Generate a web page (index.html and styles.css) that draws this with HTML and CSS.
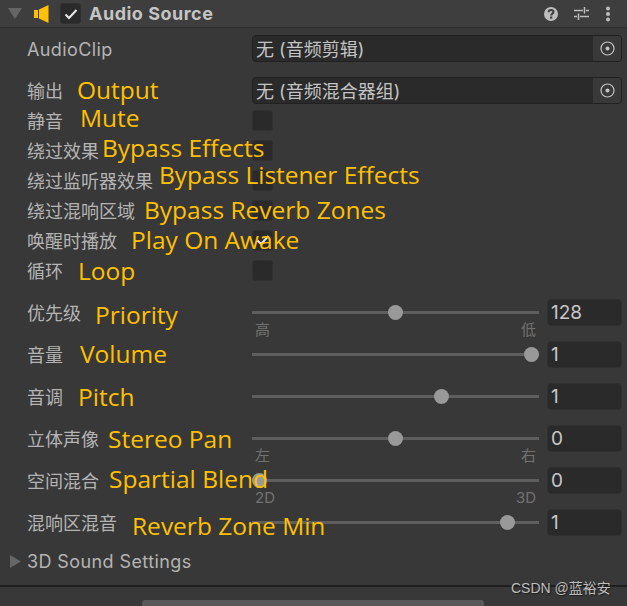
FILE: index.html
```html
<!DOCTYPE html>
<html lang="zh">
<head>
<meta charset="utf-8">
<title>Audio Source</title>
<link rel="stylesheet" href="styles.css">
</head>
<body>
<div class="inspector">
  <header class="head">
    <svg class="fold" width="14" height="11" viewBox="0 0 14 11"><path d="M0 0H14L7 11Z" fill="#666"/></svg>
    <svg class="speaker" width="15" height="18" viewBox="0 0 15 18"><path d="M0 5H4V13H0Z M5 4.5L14.5 0V18L5 13.5Z" fill="#ffc000"/></svg>
    <span class="box head-box"><svg width="14" height="12" viewBox="0 0 14 12"><path d="M1.5 6.5L5 10L12.5 2" fill="none" stroke="#e8e8e8" stroke-width="2"/></svg></span>
    <span class="title">Audio Source</span>
    <span class="tools">
      <svg width="16" height="16" viewBox="0 0 16 16"><circle cx="8" cy="8" r="7" fill="#bdbdbd"/><path d="M5.6 6.2C5.7 4.6 6.8 3.9 8.1 3.9C9.500 3.900 10.500 4.800 10.500 6C10.500 7.600 8.200 7.700 8.200 9.500" fill="none" stroke="#3e3e3e" stroke-width="2"/><rect x="7.100" y="10.500" width="2.200" height="2.200" fill="#3e3e3e"/></svg>
      <svg width="16" height="15" viewBox="0 0 16 15"><path d="M0 4.500H9M12 4.500H15M0 10.500H3M6 10.500H15M10.500 1V7.500M4.500 7.500V14" stroke="#bdbdbd" stroke-width="1.500" fill="none"/></svg>
      <svg class="dots" width="6" height="16" viewBox="0 0 6 16"><circle cx="3" cy="2.500" r="2" fill="#bdbdbd"/><circle cx="3" cy="8" r="2" fill="#bdbdbd"/><circle cx="3" cy="13.500" r="2" fill="#bdbdbd"/></svg>
    </span>
  </header>

  <section class="fields">
    <div class="row row-clip"><span class="label latin">AudioClip</span><div class="object"><span class="object-text">无 (音频剪辑)</span><span class="picker"><svg width="15" height="15" viewBox="0 0 15 15"><circle cx="7.500" cy="7.500" r="6.500" fill="none" stroke="#c4c4c4" stroke-width="1.200"/><circle cx="7.500" cy="7.500" r="2" fill="#c4c4c4"/></svg></span></div></div>
    <div class="row row-output"><span class="label">输出</span><div class="object"><span class="object-text">无 (音频混合器组)</span><span class="picker"><svg width="15" height="15" viewBox="0 0 15 15"><circle cx="7.500" cy="7.500" r="6.500" fill="none" stroke="#c4c4c4" stroke-width="1.200"/><circle cx="7.500" cy="7.500" r="2" fill="#c4c4c4"/></svg></span></div></div>
  </section>

  <section class="toggles">
    <div class="row row-toggle"><span class="label">静音</span><span class="box"></span></div>
    <div class="row row-toggle"><span class="label">绕过效果</span><span class="box"></span></div>
    <div class="row row-toggle"><span class="label">绕过监听器效果</span><span class="box"></span></div>
    <div class="row row-toggle"><span class="label">绕过混响区域</span><span class="box"></span></div>
    <div class="row row-toggle"><span class="label">唤醒时播放</span><span class="box"><svg width="14" height="12" viewBox="0 0 14 12"><path d="M1.500 6.500L5 10L12.500 2" fill="none" stroke="#e8e8e8" stroke-width="2"/></svg></span></div>
    <div class="row row-toggle"><span class="label">循环</span><span class="box"></span></div>
  </section>

  <section class="sliders">
    <div class="row row-slider"><span class="label">优先级</span><div class="track"><span class="thumb" style="--v:0.5"></span><span class="end end-l">高</span><span class="end end-r">低</span></div><span class="number">128</span></div>
    <div class="row row-slider"><span class="label">音量</span><div class="track"><span class="thumb" style="--v:1"></span></div><span class="number">1</span></div>
    <div class="row row-slider"><span class="label">音调</span><div class="track"><span class="thumb" style="--v:0.67"></span></div><span class="number">1</span></div>
    <div class="row row-slider"><span class="label">立体声像</span><div class="track"><span class="thumb" style="--v:0.5"></span><span class="end end-l">左</span><span class="end end-r">右</span></div><span class="number">0</span></div>
    <div class="row row-slider"><span class="label">空间混合</span><div class="track"><span class="thumb" style="--v:0"></span><span class="end end-l">2D</span><span class="end end-r">3D</span></div><span class="number">0</span></div>
    <div class="row row-slider"><span class="label">混响区混音</span><div class="track"><span class="thumb" style="--v:0.91"></span></div><span class="number">1</span></div>
  </section>

  <div class="foldout">
    <svg width="11" height="13" viewBox="0 0 11 13"><path d="M0 0L11 6.500L0 13Z" fill="#666"/></svg>
    <span class="label latin">3D Sound Settings</span>
  </div>

  <footer class="foot"><span class="add-button"></span></footer>
</div>

<div class="notes">
  <span class="note n-output">Output</span>
  <span class="note n-mute">Mute</span>
  <span class="note n-bypass">Bypass Effects</span>
  <span class="note n-listener">Bypass Listener Effects</span>
  <span class="note n-zones">Bypass Reverb Zones</span>
  <span class="note n-play">Play On Awake</span>
  <span class="note n-loop">Loop</span>
  <span class="note n-priority">Priority</span>
  <span class="note n-volume">Volume</span>
  <span class="note n-pitch">Pitch</span>
  <span class="note n-stereo">Stereo Pan</span>
  <span class="note n-spatial">Spartial Blend</span>
  <span class="note n-zone-min">Reverb Zone Min</span>
</div>
<span class="watermark">CSDN @蓝裕安</span>
</body>
</html>
```

FILE: styles.css
```css
html, body {
  margin: 0;
  padding: 0;
  height: 606px;
  overflow: hidden;
  background: #383838;
}
body {
  position: relative;
  font-family: Inter, "Noto Sans CJK SC", sans-serif;
  color: #b4b4b4;
}
.inspector {
  display: flex;
  flex-direction: column;
  height: 606px;
}
.head {
  display: flex;
  align-items: center;
  height: 27px;
  padding-left: 8px;
  background: #3e3e3e;
  border-bottom: 1px solid #2f2f2f;
}
.speaker { margin-left: 12px; }
.head-box { margin-left: 11px; }
.title {
  margin-left: 8px;
  font-size: 18px;
  font-weight: 700;
  letter-spacing: 0.5px;
  color: #c4c4c4;
}
.tools {
  display: flex;
  align-items: center;
  gap: 15px;
  margin-left: auto;
  padding-right: 16px;
}
.row {
  display: flex;
  padding-left: 27px;
  padding-right: 5px;
}
.label {
  font-size: 18px;
  color: #b4b4b4;
  white-space: nowrap;
}
.latin { letter-spacing: 0.4px; }
.row .label { flex: 0 0 225px; }
.row-clip { height: 42px; padding-top: 7px; box-sizing: border-box; }
.row-clip .label, .row-output .label { line-height: 29px; }
.row-output { height: 35px; padding-top: 7px; box-sizing: border-box; }
.object {
  flex: 1;
  display: flex;
  height: 27px;
  box-sizing: border-box;
  border: 1px solid #212121;
  border-radius: 4px;
  background: #2a2a2a;
  overflow: hidden;
}
.object-text {
  flex: 1;
  padding-left: 3px;
  font-size: 18px;
  line-height: 27px;
  color: #c4c4c4;
}
.picker {
  display: flex;
  align-items: center;
  justify-content: center;
  width: 28px;
  background: #393939;
}
.row-toggle { height: 30px; align-items: center; }
.box {
  display: flex;
  align-items: center;
  justify-content: center;
  width: 21px;
  height: 21px;
  box-sizing: border-box;
  border: 1px solid #303030;
  border-radius: 3px;
  background: #2a2a2a;
}
.sliders { margin-top: 6px; }
.row-slider { height: 42px; align-items: center; }
.track {
  position: relative;
  flex: 1;
  height: 3px;
  margin-right: 8px;
  background: #5e5e5e;
}
.thumb {
  position: absolute;
  top: -6px;
  left: calc((100% - 15px) * var(--v));
  width: 15px;
  height: 15px;
  border-radius: 50%;
  background: #999;
}
.end {
  position: absolute;
  top: 9px;
  font-size: 15px;
  line-height: 20px;
  color: #727272;
}
.end-l { left: 3px; }
.end-r { right: 3px; }
.number {
  flex: 0 0 75px;
  height: 27px;
  box-sizing: border-box;
  padding-left: 3px;
  border: 1px solid #303030;
  border-radius: 4px;
  background: #2a2a2a;
  font-size: 19px;
  line-height: 25px;
  color: #c8c8c8;
}
.foldout {
  display: flex;
  align-items: center;
  gap: 6px;
  height: 24px;
  margin-top: 6px;
  padding-left: 10px;
}
.foot {
  position: relative;
  margin-top: 12px;
  flex: 1;
  border-top: 2px solid #1f1f1f;
  display: flex;
  justify-content: center;
}
.add-button {
  width: 342px;
  height: 6px;
  margin-top: 13px;
  margin-right: 1px;
  border-radius: 3px 3px 0 0;
  background: #585858;
}
.notes { position: absolute; inset: 0; pointer-events: none; }
.note {
  position: absolute;
  font-family: "Open Sans", "Noto Sans", sans-serif;
  font-size: 24.5px;
  line-height: 34px;
  color: #ffc000;
  white-space: nowrap;
}
.n-output   { left: 77px;  top: 73px; }
.n-mute     { left: 80px;  top: 101px; }
.n-bypass   { left: 102px; top: 131px; }
.n-listener { left: 159px; top: 158px; }
.n-zones    { left: 144px; top: 193px; }
.n-play     { left: 131px; top: 223px; }
.n-loop     { left: 78px;  top: 254px; }
.n-priority { left: 95px;  top: 298px; }
.n-volume   { left: 80px;  top: 337px; }
.n-pitch    { left: 78px;  top: 380px; }
.n-stereo   { left: 108px; top: 422px; }
.n-spatial  { left: 109px; top: 462px; }
.n-zone-min { left: 132px; top: 509px; }
.watermark {
  position: absolute;
  left: 511px;
  top: 579px;
  font-family: "Liberation Sans", "Noto Sans CJK SC", sans-serif;
  font-size: 14px;
  line-height: 18px;
  color: #bdbdbd;
  text-shadow: 1px 1px 1px #1e1e1e;
}
```
